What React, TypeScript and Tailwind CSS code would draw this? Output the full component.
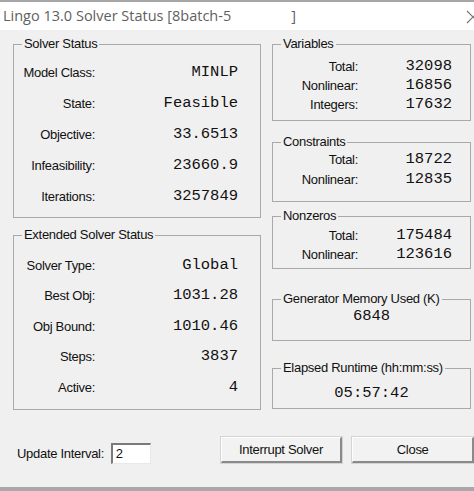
import React from 'react';

type Item = { label: string; value: string };

const solverStatus: Item[] = [
  { label: 'Model Class:', value: 'MINLP' },
  { label: 'State:', value: 'Feasible' },
  { label: 'Objective:', value: '33.6513' },
  { label: 'Infeasibility:', value: '23660.9' },
  { label: 'Iterations:', value: '3257849' },
];

const extended: Item[] = [
  { label: 'Solver Type:', value: 'Global' },
  { label: 'Best Obj:', value: '1031.28' },
  { label: 'Obj Bound:', value: '1010.46' },
  { label: 'Steps:', value: '3837' },
  { label: 'Active:', value: '4' },
];

function Group({ title, className, children }: { title: string; className: string; children: React.ReactNode }) {
  return (
    <fieldset className={`border border-[#a9a9a9] ${className}`}>
      <legend className="ml-[8px] px-[2px] text-[13px] leading-[14px] tracking-[-0.3px] text-[#111]">{title}</legend>
      {children}
    </fieldset>
  );
}

function LeftRows({ items, rowH, top }: { items: Item[]; rowH: string; top: string }) {
  return (
    <div className={`flex flex-col ${top}`}>
      {items.map((it) => (
        <div key={it.label} className={`flex items-center ${rowH}`}>
          <span className="w-[81px] text-right text-[13px] tracking-[-0.3px] text-[#111] whitespace-nowrap">{it.label}</span>
          <span className="flex-1 pr-[22px] text-right font-['Liberation_Mono'] text-[15.5px] text-[#111] whitespace-pre">{it.value}</span>
        </div>
      ))}
    </div>
  );
}

function RightRows({ items, rowH, top }: { items: Item[]; rowH: string; top: string }) {
  return (
    <div className={`flex flex-col ${top}`}>
      {items.map((it) => (
        <div key={it.label} className={`flex items-center ${rowH}`}>
          <span className="w-[85px] text-right text-[13px] tracking-[-0.3px] text-[#111] whitespace-nowrap">{it.label}</span>
          <span className="flex-1 pr-[18px] text-right font-['Liberation_Mono'] text-[15.5px] text-[#111]">{it.value}</span>
        </div>
      ))}
    </div>
  );
}

export default function App() {
  return (
    <div className="w-[474px] h-[491px] overflow-hidden flex flex-col bg-[#f0f0f0] font-['Liberation_Sans',sans-serif]">
      {/* title bar */}
      <div className="h-[30px] shrink-0 bg-white border-t-[2px] border-[#a6a6a6] flex items-center relative overflow-hidden">
        <span className="pl-[3px] font-['Open_Sans',sans-serif] text-[14.5px] text-[#5f5f5f] whitespace-nowrap">Lingo 13.0 Solver Status [8batch-5</span>
        <span className="ml-[60px] font-['Open_Sans',sans-serif] text-[14.5px] text-[#5f5f5f]">]</span>
        <svg className="absolute left-[466px] top-[8px]" width="14" height="14" viewBox="0 0 14 14">
          <path d="M1 1 L13 13 M13 1 L1 13" stroke="#777" strokeWidth="1.2" fill="none" />
        </svg>
      </div>

      {/* panels */}
      <div className="h-[380px] shrink-0 flex gap-[11px] pl-[13px] pr-[3px] pt-[7px]">
        <div className="w-[248px] shrink-0 flex flex-col">
          <Group title="Solver Status" className="h-[181px]">
            <LeftRows items={solverStatus} rowH="h-[31px]" top="pt-[6px]" />
          </Group>
          <Group title="Extended Solver Status" className="h-[182px] mt-[10px]">
            <LeftRows items={extended} rowH="h-[30.5px]" top="pt-[8px]" />
          </Group>
        </div>

        <div className="w-[199px] shrink-0 flex flex-col">
          <Group title="Variables" className="h-[84px]">
            <RightRows
              items={[
                { label: 'Total:', value: '32098' },
                { label: 'Nonlinear:', value: '16856' },
                { label: 'Integers:', value: '17632' },
              ]}
              rowH="h-[19px]"
              top="pt-[6px]"
            />
          </Group>
          <Group title="Constraints" className="h-[67px] mt-[14px]">
            <RightRows
              items={[
                { label: 'Total:', value: '18722' },
                { label: 'Nonlinear:', value: '12835' },
              ]}
              rowH="h-[20px]"
              top="pt-[1px]"
            />
          </Group>
          <Group title="Nonzeros" className="h-[60px] mt-[7px]">
            <RightRows
              items={[
                { label: 'Total:', value: '175484' },
                { label: 'Nonlinear:', value: '123616' },
              ]}
              rowH="h-[19px]"
              top="pt-[3px]"
            />
          </Group>
          <Group title="Generator Memory Used (K)" className="h-[49px] mt-[23px]">
            <div className="h-[20px] mt-[1px] flex items-center justify-center font-['Liberation_Mono'] text-[15.5px] text-[#111]">6848</div>
          </Group>
          <Group title="Elapsed Runtime (hh:mm:ss)" className="h-[48px] mt-[20px]">
            <div className="h-[20px] mt-[9px] flex items-center justify-center font-['Liberation_Mono'] text-[15.5px] text-[#111]">05:57:42</div>
          </Group>
        </div>
      </div>

      {/* footer */}
      <div className="flex-1 flex items-start pt-[27px] pl-[17px]">
        <span className="w-[94px] mt-[7px] text-[13px] tracking-[-0.3px] text-[#111] whitespace-nowrap">Update Interval:</span>
        <div className="w-[40px] h-[21px] mt-[6px] bg-white border-t-[2px] border-l-[2px] border-t-[#7a7a7a] border-l-[#7a7a7a] border-r border-b border-r-[#e8e8e8] border-b-[#e8e8e8] text-[13px] leading-[17px] pl-[3px] text-[#111]">2</div>
        <button className="ml-[70px] w-[122px] h-[26px] bg-[#f2f2f2] border-t border-l border-t-[#fdfdfd] border-l-[#fdfdfd] border-r-[2px] border-b-[2px] border-r-[#8a8a8a] border-b-[#8a8a8a] shadow-[0_0_0_1px_#d4d4d4] text-[13px] tracking-[-0.3px] text-[#111]">Interrupt Solver</button>
        <button className="ml-[10px] w-[122px] h-[26px] bg-[#f2f2f2] border-t border-l border-t-[#fdfdfd] border-l-[#fdfdfd] border-r-[2px] border-b-[2px] border-r-[#8a8a8a] border-b-[#8a8a8a] shadow-[0_0_0_1px_#d4d4d4] text-[13px] tracking-[-0.3px] text-[#111]">Close</button>
      </div>
      <div className="h-[4px] shrink-0 bg-[#a8a8a8]" />
    </div>
  );
}
